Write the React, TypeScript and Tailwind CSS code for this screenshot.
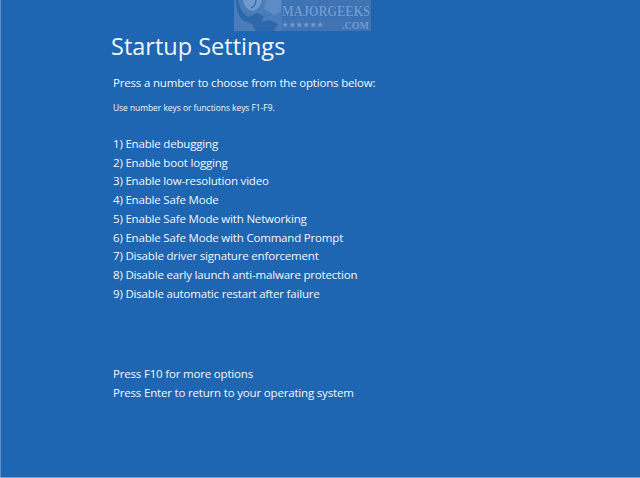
const options = [
  "1) Enable debugging",
  "2) Enable boot logging",
  "3) Enable low-resolution video",
  "4) Enable Safe Mode",
  "5) Enable Safe Mode with Networking",
  "6) Enable Safe Mode with Command Prompt",
  "7) Disable driver signature enforcement",
  "8) Disable early launch anti-malware protection",
  "9) Disable automatic restart after failure",
];

// Watermark in the top corner of the screenshot
const Watermark = () => (
  <div className="absolute left-[234px] top-0 flex h-[31px] w-[137px] bg-[#3f73b3]">
    <svg width="48" height="31" viewBox="0 0 48 31" className="shrink-0">
      <path d="M0 0 H48 V31 H0 Z" fill="#4a7cb9" />
      <path d="M4 0 Q6 12 14 17 L24 13 L30 17 L27 22 L36 20 L44 24 L40 31 H22 L18 24 L8 20 Q2 12 2 0 Z" fill="#2d66ab" />
      <path d="M9 0 Q10 9 19 11 Q26 9 28 0 Z" fill="#6f9ad0" />
      <path d="M22 0 Q22 6 17 8" stroke="#2d66ab" strokeWidth="1.2" fill="none" />
      <path d="M32 0 L30 9 L40 15 L47 12 V0 Z" fill="#5c8bc6" />
    </svg>
    <div className="flex w-[87px] flex-col pt-[6px] font-['Liberation_Serif',serif] font-bold text-[#6f9bd2]">
      <span className="origin-top-left scale-y-110 text-[12.5px] leading-[10px] tracking-[-0.1px] whitespace-nowrap [text-shadow:0_0_1px_#1f5ba3]">
        MAJORGEEKS
      </span>
      <div className="mt-[5px] flex items-center justify-between leading-[9px]">
        <span className="text-[7px] tracking-[1px]">★★★★★★</span>
        <span className="text-[10px]">.COM</span>
      </div>
    </div>
  </div>
);

const App = () => {
  return (
    <div className="relative h-[478px] w-[640px] overflow-hidden bg-[#1f66b2] font-['Open_Sans',sans-serif] text-[#f2f6fb]">
      <Watermark />
      <div className="absolute left-0 top-0 h-full w-[1px] bg-[#5b8fc9]" />
      <div className="absolute bottom-0 left-0 h-[1px] w-full bg-[#6ba3de]" />
      <div className="flex flex-col pl-[111px] pt-[31px]">
        <h1 className="text-[23.5px] leading-[30px] font-normal">Startup Settings</h1>
        <p className="mt-[13px] pl-[2px] text-[11.5px] leading-[18px] tracking-[-0.18px]">
          Press a number to choose from the options below:
        </p>
        <p className="mt-[10px] pl-[2px] text-[8.4px] leading-[12px]">
          Use number keys or functions keys F1-F9.
        </p>
        <ul className="mt-[21px] pl-[2px] text-[11.5px] leading-[18.7px] tracking-[-0.18px]">
          {options.map((item) => (
            <li key={item}>{item}</li>
          ))}
        </ul>
        <div className="mt-[62px] pl-[2px] text-[11.5px] leading-[18.7px] tracking-[-0.18px]">
          <p>Press F10 for more options</p>
          <p>Press Enter to return to your operating system</p>
        </div>
      </div>
    </div>
  );
};

export default App;
